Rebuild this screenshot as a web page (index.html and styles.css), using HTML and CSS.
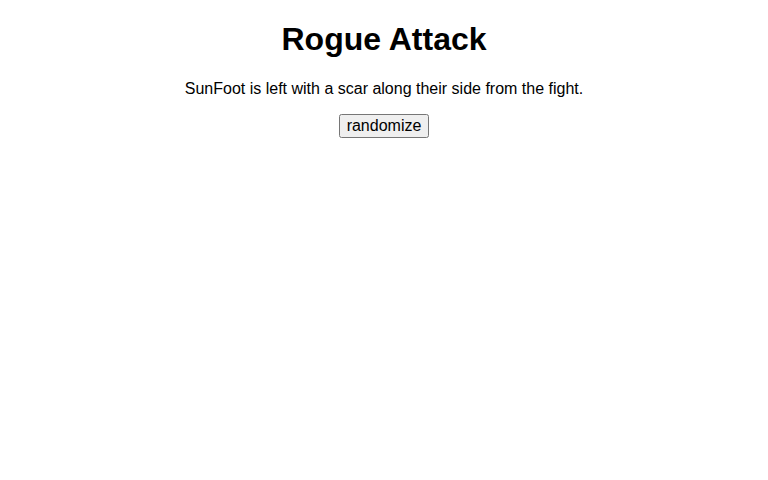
FILE: index.html
```html
<!DOCTYPE html>
<html lang="en">
<head>
    <meta charset="UTF-8">
    <meta name="viewport" content="width=device-width, initial-scale=1.0">
    <title>Rogue Attack</title>
    <link rel="stylesheet" href="styles.css">
</head>
<body>
    <div class="container">
        <h1>Rogue Attack</h1>
        <p id="outcome">SunFoot is left with a scar along their side from the fight.</p>
        <button id="randomize">randomize</button>
    </div>
</body>
</html>
```
FILE: styles.css
```css
body {
    margin: 0;
    font-family: "Liberation Sans", Arial, sans-serif;
    text-align: center;
}
button {
    font-family: "Liberation Sans", Arial, sans-serif;
    font-size: 16px;
}
```
